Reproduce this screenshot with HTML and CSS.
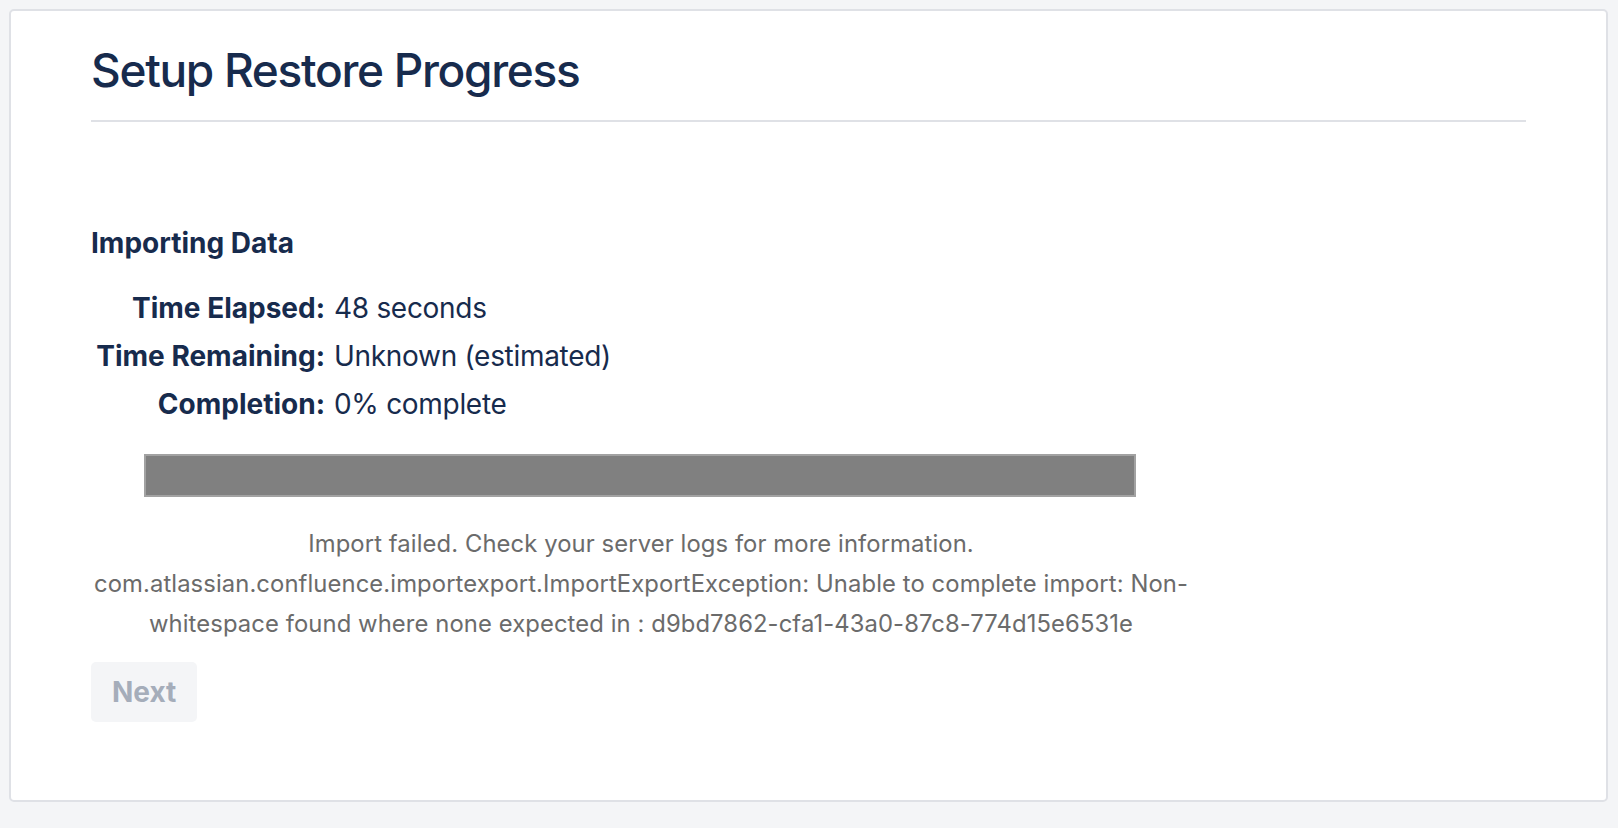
FILE: index.html
```html
<!DOCTYPE html>
<html lang="en">
<head>
<meta charset="utf-8">
<title>Setup Restore Progress</title>
<link rel="stylesheet" href="styles.css">
</head>
<body>
<main class="card">
  <h1 class="title">Setup Restore Progress</h1>
  <section class="progress">
    <h2 class="subtitle">Importing Data</h2>
    <dl class="stats">
      <dt>Time Elapsed:</dt><dd>48 seconds</dd>
      <dt>Time Remaining:</dt><dd>Unknown (estimated)</dd>
      <dt>Completion:</dt><dd>0% complete</dd>
    </dl>
    <div class="status">
      <div class="bar"></div>
      <p class="message">Import failed. Check your server logs for more information.<br>com.atlassian.confluence.importexport.ImportExportException: Unable to complete import: Non-whitespace found where none expected in : d9bd7862-cfa1-43a0-87c8-774d15e6531e</p>
    </div>
    <button class="next" type="button" disabled>Next</button>
  </section>
</main>
</body>
</html>
```

FILE: styles.css
```css
html, body {
  margin: 0;
  padding: 0;
}
body {
  background: #f4f5f7;
  font-family: Inter, "Noto Sans", "Liberation Sans", sans-serif;
  color: #172b4d;
  padding: 9px 10px 26px 9px;
}
.card {
  background: #ffffff;
  border: 2px solid #dfe1e6;
  border-radius: 5px;
  padding: 30px 80px 78px 80px;
  height: 793px;
  box-sizing: border-box;
}
.title {
  margin: 0;
  font-size: 46px;
  line-height: 58px;
  font-weight: 500;
  letter-spacing: -1.3px;
  color: #172b4d;
  padding-bottom: 21px;
  border-bottom: 2px solid #dfe1e6;
}
.subtitle {
  margin: 104px 0 0 0;
  font-size: 28px;
  line-height: 34px;
  font-weight: 700;
  color: #172b4d;
}
.stats {
  margin: 24px 0 0 0;
  display: grid;
  grid-template-columns: 234px auto;
  column-gap: 9px;
  justify-content: start;
  font-size: 28px;
  line-height: 48px;
}
.stats dt {
  font-weight: 700;
  text-align: right;
}
.stats dd {
  margin: 0;
  font-weight: 400;
  letter-spacing: -0.3px;
}
.status {
  width: 1100px;
  margin-top: 26px;
}
.bar {
  width: 992px;
  height: 43px;
  box-sizing: border-box;
  margin: 0 0 0 53px;
  background: #808080;
  border: 2px solid #a2a2a2;
}
.message {
  margin: 27px 0 0 0;
  text-align: center;
  font-size: 23.8px;
  line-height: 40px;
  letter-spacing: 0.1px;
  color: #6b6b6b;
}
.next {
  margin-top: 18px;
  display: block;
  height: 60px;
  padding: 0 21px;
  border: none;
  border-radius: 5px;
  background: #f4f5f7;
  color: #a5adba;
  font-family: inherit;
  font-size: 28px;
  font-weight: 700;
  line-height: 60px;
}
```
